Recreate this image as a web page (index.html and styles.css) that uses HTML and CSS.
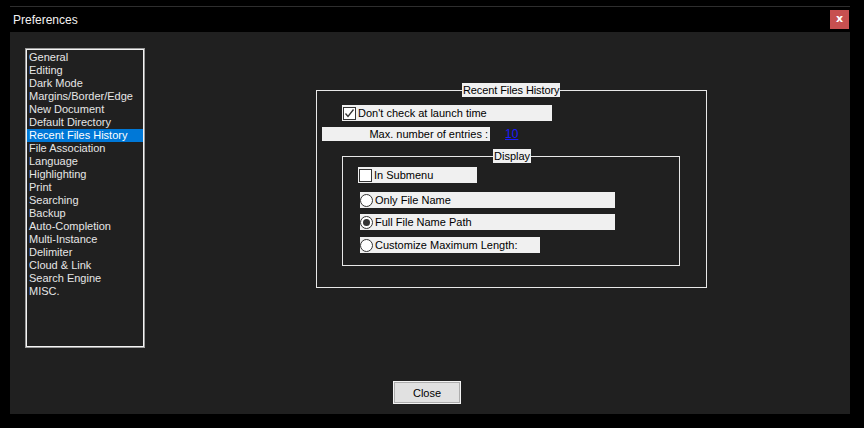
FILE: index.html
```html
<!DOCTYPE html>
<html>
<head>
<meta charset="utf-8">
<link rel="stylesheet" href="styles.css">
</head>
<body>
<div class="window">
  <div class="titlebar">
    <span class="title">Preferences</span>
    <span class="close-x">x</span>
  </div>
  <div class="content">
    <div class="main-row">
      <ul class="list">
        <li>General</li>
        <li>Editing</li>
        <li>Dark Mode</li>
        <li>Margins/Border/Edge</li>
        <li>New Document</li>
        <li>Default Directory</li>
        <li class="selected">Recent Files History</li>
        <li>File Association</li>
        <li>Language</li>
        <li>Highlighting</li>
        <li>Print</li>
        <li>Searching</li>
        <li>Backup</li>
        <li>Auto-Completion</li>
        <li>Multi-Instance</li>
        <li>Delimiter</li>
        <li>Cloud &amp; Link</li>
        <li>Search Engine</li>
        <li>MISC.</li>
      </ul>
      <fieldset class="group group-recent">
        <legend class="legend legend-recent">Recent Files History</legend>
        <div class="ctl row-launch">
          <span class="checkbox">
            <svg width="11" height="11" viewBox="0 0 11 11"><polyline points="1.5,5.5 4,8.5 9.5,1.5" fill="none" stroke="#333" stroke-width="1.3"/></svg>
          </span>
          <span class="ctl-text">Don't check at launch time</span>
        </div>
        <div class="row-max">
          <span class="ctl max-label">Max. number of entries :</span>
          <a class="link">10</a>
        </div>
        <fieldset class="group group-display">
          <legend class="legend legend-display">Display</legend>
          <div class="ctl row-submenu">
            <span class="checkbox"></span>
            <span class="ctl-text">In Submenu</span>
          </div>
          <div class="ctl row-radio r1">
            <span class="radio"></span>
            <span class="ctl-text">Only File Name</span>
          </div>
          <div class="ctl row-radio r2">
            <span class="radio checked"><span class="dot"></span></span>
            <span class="ctl-text">Full File Name Path</span>
          </div>
          <div class="ctl row-radio r3">
            <span class="radio"></span>
            <span class="ctl-text">Customize Maximum Length:</span>
          </div>
        </fieldset>
      </fieldset>
    </div>
    <button class="btn-close">Close</button>
  </div>
</div>
</body>
</html>
```
FILE: styles.css
```css
html, body {
  margin: 0;
  padding: 0;
  background: #000;
  width: 864px;
  height: 428px;
  overflow: hidden;
  font-family: "Liberation Sans", Arial, sans-serif;
  font-size: 11px;
}

.window {
  margin-left: 10px;
  margin-top: 6px;
  width: 840px;
  border-top: 1px solid #2e2e2e;
}

.titlebar {
  height: 25px;
  background: #000;
  display: flex;
  align-items: center;
  justify-content: space-between;
  padding-left: 3px;
  padding-right: 1px;
  box-sizing: border-box;
}

.title {
  color: #f2f2f2;
  font-size: 12px;
  margin-top: 1px;
}

.close-x {
  width: 19px;
  height: 19px;
  background: #c75050;
  color: #fff;
  font-weight: bold;
  font-size: 11px;
  line-height: 17px;
  text-align: center;
  font-family: "DejaVu Sans", sans-serif;
}

.content {
  background: #202020;
  height: 382px;
  padding: 16px 0 0 15px;
  box-sizing: border-box;
}

.main-row {
  display: flex;
  align-items: flex-start;
}

.list {
  list-style: none;
  margin: 0;
  padding: 1px 1px;
  width: 120px;
  height: 300px;
  box-sizing: border-box;
  border: 1px solid #9a9a9a;
  box-shadow: inset 0 0 0 1px #f4f4f4;
  color: #e6e6e6;
}

.list li {
  height: 13px;
  line-height: 13px;
  padding-left: 2px;
  white-space: nowrap;
}

.list li:first-child {
  margin-top: 1px;
}

.list li.selected {
  background: #0078d7;
  color: #fff;
}

.group {
  margin: 0;
  padding: 0;
  border: 1px solid #e8e8e8;
  box-sizing: border-box;
  min-width: 0;
}

.group-recent {
  margin-left: 171px;
  margin-top: 35px;
  width: 391px;
  height: 205px;
}

.legend {
  padding: 0 1px;
  background: #f0f0f0;
  color: #000;
  height: 14px;
  line-height: 14px;
}

.legend-recent {
  margin-left: 145px;
  letter-spacing: -0.1px;
}

.legend-display {
  margin-left: 150px;
}

.ctl {
  display: flex;
  align-items: center;
  background: #f0f0f0;
  color: #000;
  height: 16px;
  box-sizing: border-box;
  white-space: nowrap;
}

.ctl-text {
  margin-left: 2px;
}

.checkbox {
  width: 13px;
  height: 13px;
  box-sizing: border-box;
  border: 1px solid #333;
  background: #fff;
  display: flex;
  align-items: center;
  justify-content: center;
  flex: none;
  margin-left: 1px;
}

.row-launch {
  margin-left: 25px;
  margin-top: 8px;
  width: 210px;
}

.row-max {
  display: flex;
  align-items: center;
  margin-top: 6px;
  margin-left: 5px;
}

.max-label {
  width: 168px;
  height: 14px;
  justify-content: flex-end;
  padding-right: 2px;
}

.link {
  color: #1a1aff;
  text-decoration: underline;
  margin-left: 15px;
  font-size: 12px;
}

.group-display {
  margin-left: 25px;
  margin-top: 8px;
  width: 338px;
  height: 117px;
}

.row-submenu {
  margin-left: 15px;
  margin-top: 4px;
  width: 119px;
}

.row-radio {
  margin-left: 17px;
  width: 255px;
}

.r1 { margin-top: 9px; }
.r2 { margin-top: 6px; }
.r3 { margin-top: 7px; width: 180px; }

.radio {
  width: 13px;
  height: 13px;
  box-sizing: border-box;
  border: 1px solid #333;
  border-radius: 50%;
  background: #fff;
  display: flex;
  align-items: center;
  justify-content: center;
  flex: none;
}

.dot {
  width: 7px;
  height: 7px;
  border-radius: 50%;
  background: #333;
}

.btn-close {
  display: block;
  margin-top: 33px;
  margin-left: 368px;
  width: 68px;
  height: 23px;
  background: #e1e1e1;
  border: 1px solid #f4f4f4;
  box-shadow: inset 0 0 0 1px #adadad;
  font-family: "Liberation Sans", Arial, sans-serif;
  font-size: 11px;
  color: #000;
  padding: 0;
}
```
